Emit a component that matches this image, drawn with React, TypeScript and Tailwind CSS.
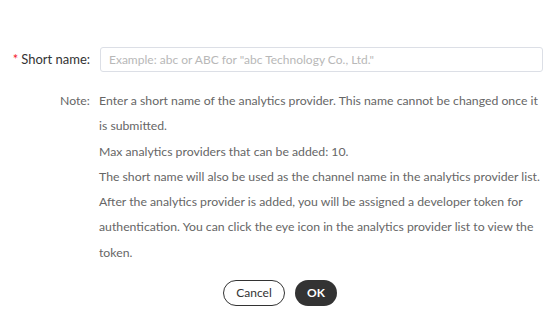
export default function App() {
  return (
    <div className="w-[556px] h-[327px] bg-white font-['Lato',sans-serif] text-[12px]">
      <div className="flex items-center pt-[47px]">
        <label className="w-[100px] pr-[10px] flex justify-end items-center text-[13px] text-[#333]">
          <span className="text-[#f5222d] mr-[3px]">*</span>
          Short name:
        </label>
        <input
          className="w-[443px] h-[25px] border border-[#dcdfe6] rounded-[3px] px-[8px] text-[12px] outline-none placeholder:text-[#b8b8b8]"
          placeholder={'Example: abc or ABC for "abc Technology Co., Ltd."'}
        />
      </div>
      <div className="flex mt-[16px] leading-[25.3px] text-[12.25px] text-[#666]">
        <div className="w-[99px] pl-[60px] shrink-0">Note:</div>
        <div className="w-[446px]">
          <p>Enter a short name of the analytics provider. This name cannot be changed once it is submitted.</p>
          <p>Max analytics providers that can be added: 10.</p>
          <p>The short name will also be used as the channel name in the analytics provider list.</p>
          <p>
            After the analytics provider is added, you will be assigned a developer token for authentication. You
            can click the eye icon in the analytics provider list to view the token.
          </p>
        </div>
      </div>
      <div className="flex justify-center gap-[10px] mt-[15px] pl-[4px]">
        <button className="w-[62px] h-[26px] rounded-full border border-[#333] text-[#333] bg-white">Cancel</button>
        <button className="w-[42px] h-[26px] rounded-full bg-[#333] text-white font-bold">OK</button>
      </div>
    </div>
  );
}
